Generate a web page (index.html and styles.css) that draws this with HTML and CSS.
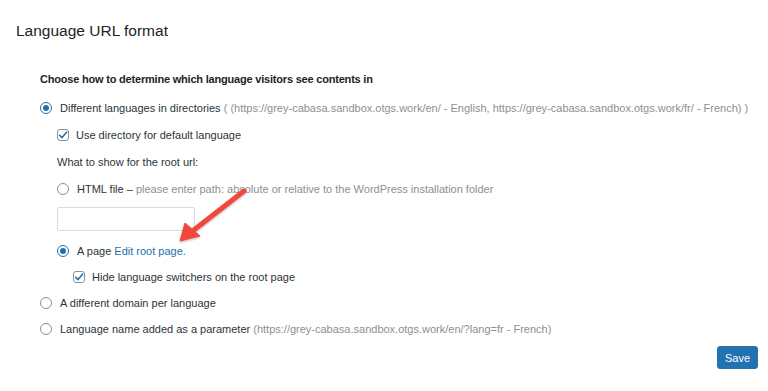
FILE: index.html
```html
<!DOCTYPE html>
<html>
<head>
<meta charset="utf-8">
<link rel="stylesheet" href="styles.css">
</head>
<body>
<div class="page">
  <h2 class="title">Language URL format</h2>
  <div class="section">
    <p class="lead">Choose how to determine which language visitors see contents in</p>
    <div class="row">
      <span class="radio on"></span>
      <span>Different languages in directories <span class="muted">( (https://grey-cabasa.sandbox.otgs.work/en/ - English, https://grey-cabasa.sandbox.otgs.work/fr/ - French) )</span></span>
    </div>
    <div class="sub">
      <div class="row">
        <span class="check on"><svg viewBox="0 0 12 12" width="12" height="12"><path d="M2.6 6.2 L5 8.6 L9.6 3.2" fill="none" stroke="#2271b1" stroke-width="1.6" stroke-linecap="round" stroke-linejoin="round"/></svg></span>
        <span>Use directory for default language</span>
      </div>
      <div class="row">What to show for the root url:</div>
      <div class="row">
        <span class="radio"></span>
        <span>HTML file – <span class="muted">please enter path: absolute or relative to the WordPress installation folder</span></span>
      </div>
      <div class="inputrow"><input class="field" type="text"></div>
      <div class="row tight">
        <span class="radio on"></span>
        <span>A page <a class="link" href="#">Edit root page.</a></span>
      </div>
      <div class="sub2">
        <div class="row tight">
          <span class="check on"><svg viewBox="0 0 12 12" width="12" height="12"><path d="M2.6 6.2 L5 8.6 L9.6 3.2" fill="none" stroke="#2271b1" stroke-width="1.6" stroke-linecap="round" stroke-linejoin="round"/></svg></span>
          <span>Hide language switchers on the root page</span>
        </div>
      </div>
    </div>
    <div class="row tight">
      <span class="radio"></span>
      <span>A different domain per language</span>
    </div>
    <div class="row tight">
      <span class="radio"></span>
      <span>Language name added as a parameter <span class="muted">(https://grey-cabasa.sandbox.otgs.work/en/?lang=fr - French)</span></span>
    </div>
  </div>
  <div class="actions"><button class="save">Save</button></div>
  <svg class="arrow" width="80" height="70" viewBox="0 0 80 70">
    <defs>
      <filter id="sh" x="-20%" y="-20%" width="140%" height="140%">
        <feDropShadow dx="0" dy="1" stdDeviation="1" flood-color="#000" flood-opacity="0.3"/>
      </filter>
    </defs>
    <g filter="url(#sh)" fill="#ef4a3c" stroke="#ef4a3c">
      <line x1="72" y1="7" x2="18" y2="49" stroke-width="5" stroke-linecap="round"/>
      <polygon points="8,57 13,39 28,52" stroke-width="1" stroke-linejoin="round"/>
    </g>
  </svg>
</div>
</body>
</html>
```
FILE: styles.css
```css
html, body {
  margin: 0;
  padding: 0;
  background: #fff;
}
body {
  font-family: "Liberation Sans", Arial, sans-serif;
  font-size: 11px;
  color: #2c3338;
}
.page {
  position: relative;
  width: 768px;
  height: 391px;
  box-sizing: border-box;
  padding: 20px 0 0 16px;
  overflow: hidden;
}
.title {
  margin: 0;
  font-size: 15.5px;
  font-weight: 400;
  color: #1d2327;
  line-height: 22px;
}
.section {
  padding: 29px 0 0 24px;
}
.lead {
  margin: 0 0 13px;
  font-weight: 700;
  line-height: 16px;
  letter-spacing: -0.2px;
  color: #1d2327;
}
.row {
  display: flex;
  align-items: center;
  gap: 8px;
  height: 16px;
  margin-bottom: 11px;
  white-space: nowrap;
}
.row.tight {
  margin-bottom: 10px;
}
.sub {
  padding-left: 17px;
}
.sub2 {
  padding-left: 16px;
}
.sub .row .check {
  margin-right: -1px;
}
.muted {
  color: #8c8f94;
}
.radio {
  flex: none;
  width: 12px;
  height: 12px;
  border: 1px solid #8c8f94;
  border-radius: 50%;
  box-sizing: border-box;
  position: relative;
  background: #fff;
}
.radio.on {
  border-color: #2271b1;
}
.radio.on::after {
  content: "";
  position: absolute;
  left: 2px;
  top: 2px;
  width: 6px;
  height: 6px;
  border-radius: 50%;
  background: #2271b1;
}
.check {
  flex: none;
  width: 12px;
  height: 12px;
  border: 1px solid #8c8f94;
  border-radius: 3px;
  box-sizing: border-box;
  display: flex;
  align-items: center;
  justify-content: center;
  background: #fff;
}
.check svg {
  display: block;
  flex: none;
}
.inputrow {
  margin: -1px 0 12px;
}
.field {
  display: block;
  width: 138px;
  height: 24px;
  box-sizing: border-box;
  border: 1px solid #dcdcde;
  border-radius: 2px;
  padding: 0;
  margin: 0;
}
.link {
  color: #2271b1;
  text-decoration: none;
}
.actions {
  display: flex;
  justify-content: flex-end;
  padding-right: 10px;
  margin-top: -1px;
}
.save {
  background: #2271b1;
  color: #fff;
  border: 1px solid #2271b1;
  border-radius: 3px;
  font-family: "Liberation Sans", Arial, sans-serif;
  font-size: 11px;
  width: 41px;
  height: 23px;
  padding: 0;
}
.arrow {
  position: absolute;
  left: 172px;
  top: 184px;
}
```
